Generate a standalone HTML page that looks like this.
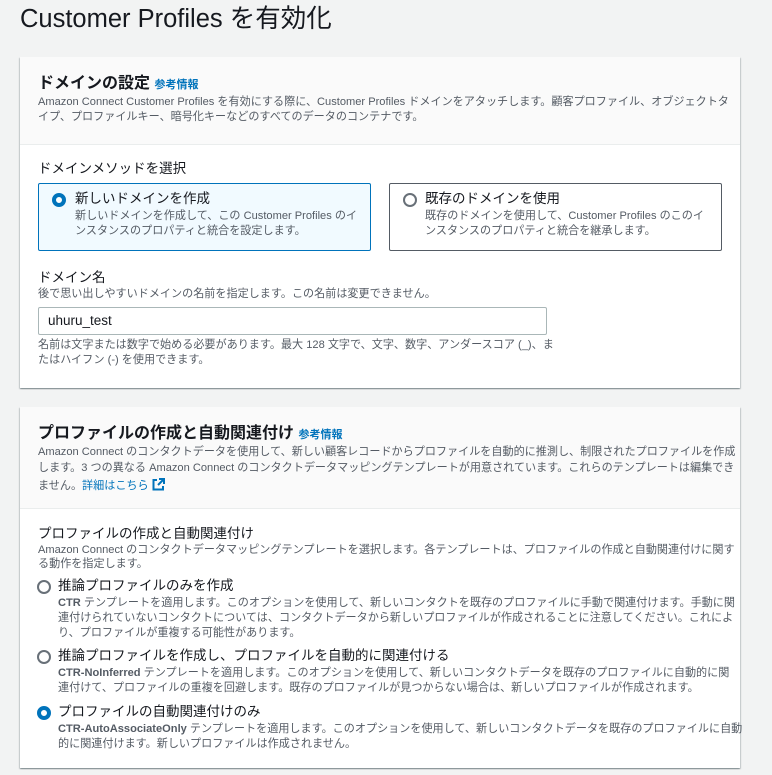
<!DOCTYPE html>
<html><head><meta charset="utf-8"><style>
*{margin:0;padding:0;box-sizing:border-box}
body{width:772px;height:775px;background:#f2f3f3;font-family:"Liberation Sans","Noto Sans CJK JP",sans-serif;color:#16191f;position:relative;overflow:hidden}
.a{position:absolute;white-space:nowrap;line-height:1}
.card{position:absolute;left:20px;width:720px;background:#fff;box-shadow:0 1px 1px 0 rgba(0,28,36,.3),1px 1px 1px 0 rgba(0,28,36,.15),-1px 1px 1px 0 rgba(0,28,36,.15)}
.hd{position:absolute;left:0;top:0;width:720px;background:#fafafa;border-bottom:1px solid #eaeded}
.s{font-size:11.1px;color:#545b64}
.h{font-size:16px;font-weight:bold}
.lk{font-size:11px;font-weight:bold;color:#0073bb}
.lb{font-size:13.5px}
.rad{position:absolute;width:14px;height:14px;border-radius:50%;border:2px solid #687078;background:#fff}
.rad.on{border:4px solid #0073bb}
.ot{font-size:13.5px}
</style></head><body>
<div class="a" style="left:20px;top:7px;font-size:25.5px;color:#16191f">Customer Profiles を有効化</div>

<div class="card" style="top:57px;height:331px">
  <div class="hd" style="height:88px"></div>
  <div class="a h" style="left:18px;top:19px">ドメインの設定 <span class="lk">参考情報</span></div>
  <div class="a s" style="left:18px;top:40px">Amazon Connect Customer Profiles を有効にする際に、Customer Profiles ドメインをアタッチします。顧客プロファイル、オブジェクトタ</div>
  <div class="a s" style="left:18px;top:55px">イプ、プロファイルキー、暗号化キーなどのすべてのデータのコンテナです。</div>
  <div class="a lb" style="left:18px;top:105px">ドメインメソッドを選択</div>
  <div style="position:absolute;left:18px;top:126px;width:333px;height:68px;border:1px solid #0073bb;background:#f1faff;border-radius:2px"></div>
  <div class="rad on" style="left:32px;top:136px"></div>
  <div class="a ot" style="left:55px;top:135px">新しいドメインを作成</div>
  <div class="a s" style="left:55px;top:154px">新しいドメインを作成して、この Customer Profiles のイ</div>
  <div class="a s" style="left:55px;top:169px">ンスタンスのプロパティと統合を設定します。</div>
  <div style="position:absolute;left:369px;top:126px;width:333px;height:68px;border:1px solid #545b64;border-radius:2px"></div>
  <div class="rad" style="left:383px;top:136px"></div>
  <div class="a ot" style="left:405px;top:135px">既存のドメインを使用</div>
  <div class="a s" style="left:405px;top:154px">既存のドメインを使用して、Customer Profiles のこのイ</div>
  <div class="a s" style="left:405px;top:169px">ンスタンスのプロパティと統合を継承します。</div>
  <div class="a lb" style="left:18px;top:214px">ドメイン名</div>
  <div class="a s" style="left:18px;top:232px">後で思い出しやすいドメインの名前を指定します。この名前は変更できません。</div>
  <div style="position:absolute;left:18px;top:250px;width:509px;height:28px;border:1px solid #aab7b8;border-radius:2px"></div>
  <div class="a" style="left:28px;top:257px;font-size:13.5px">uhuru_test</div>
  <div class="a s" style="left:18px;top:283px">名前は文字または数字で始める必要があります。最大 128 文字で、文字、数字、アンダースコア (_)、ま</div>
  <div class="a s" style="left:18px;top:298px">たはハイフン (-) を使用できます。</div>
</div>

<div class="card" style="top:407px;height:361px">
  <div class="hd" style="height:102px"></div>
  <div class="a h" style="left:18px;top:19px">プロファイルの作成と自動関連付け <span class="lk">参考情報</span></div>
  <div class="a s" style="left:18px;top:40px">Amazon Connect のコンタクトデータを使用して、新しい顧客レコードからプロファイルを自動的に推測し、制限されたプロファイルを作成</div>
  <div class="a s" style="left:18px;top:56px">します。3 つの異なる Amazon Connect のコンタクトデータマッピングテンプレートが用意されています。これらのテンプレートは編集でき</div>
  <div class="a s" style="left:18px;top:71px">ません。<span style="color:#0073bb">詳細はこちら</span> <svg width="13" height="13" viewBox="0 0 13 13" style="vertical-align:-2px"><path d="M5 2H1.5v9.5H11V8" fill="none" stroke="#0073bb" stroke-width="2"/><path d="M7 1h5v5M12 1L6 7" fill="none" stroke="#0073bb" stroke-width="2"/></svg></div>
  <div class="a lb" style="left:18px;top:120px">プロファイルの作成と自動関連付け</div>
  <div class="a s" style="left:18px;top:138px">Amazon Connect のコンタクトデータマッピングテンプレートを選択します。各テンプレートは、プロファイルの作成と自動関連付けに関す</div>
  <div class="a s" style="left:18px;top:152px">る動作を指定します。</div>
  <div class="rad" style="left:17px;top:173px"></div>
  <div class="a ot" style="left:38px;top:172px">推論プロファイルのみを作成</div>
  <div class="a s" style="left:38px;top:191px"><b>CTR</b> テンプレートを適用します。このオプションを使用して、新しいコンタクトを既存のプロファイルに手動で関連付けます。手動に関</div>
  <div class="a s" style="left:38px;top:206px">連付けられていないコンタクトについては、コンタクトデータから新しいプロファイルが作成されることに注意してください。これによ</div>
  <div class="a s" style="left:38px;top:221px">り、プロファイルが重複する可能性があります。</div>
  <div class="rad" style="left:17px;top:243px"></div>
  <div class="a ot" style="left:38px;top:242px">推論プロファイルを作成し、プロファイルを自動的に関連付ける</div>
  <div class="a s" style="left:38px;top:261px"><b>CTR-NoInferred</b> テンプレートを適用します。このオプションを使用して、新しいコンタクトデータを既存のプロファイルに自動的に関</div>
  <div class="a s" style="left:38px;top:276px">連付けて、プロファイルの重複を回避します。既存のプロファイルが見つからない場合は、新しいプロファイルが作成されます。</div>
  <div class="rad on" style="left:17px;top:299px"></div>
  <div class="a ot" style="left:38px;top:298px">プロファイルの自動関連付けのみ</div>
  <div class="a s" style="left:38px;top:317px"><b>CTR-AutoAssociateOnly</b> テンプレートを適用します。このオプションを使用して、新しいコンタクトデータを既存のプロファイルに自動</div>
  <div class="a s" style="left:38px;top:332px">的に関連付けます。新しいプロファイルは作成されません。</div>
</div>
</body></html>
